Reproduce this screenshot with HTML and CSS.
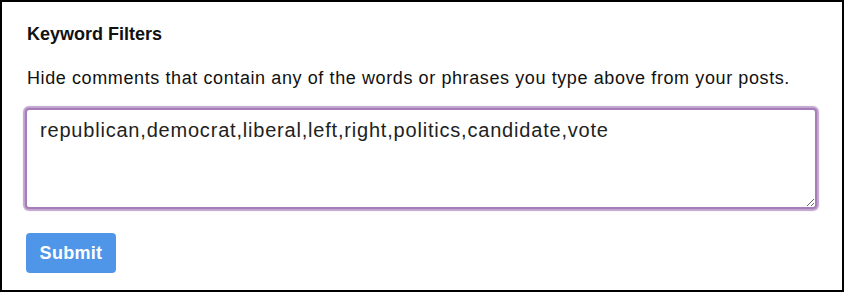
FILE: index.html
```html
<!DOCTYPE html>
<html lang="en">

<head>
  <meta charset="UTF-8">
  <meta name="viewport" content="width=device-width, initial-scale=1.0">
  <title>Keyword Filters</title>
  <link rel="stylesheet" href="styles.css">
</head>

<body>
  <div class="panel">
    <h3 class="tit">Keyword Filters</h3>
    <p class="desc">Hide comments that contain any of the words or phrases you type above from your posts.</p>
    <textarea class="words">republican,democrat,liberal,left,right,politics,candidate,vote</textarea>
    <button class="btn-submit">Submit</button>
  </div>
</body>

</html>
```

FILE: styles.css
```css
body,
div,
h3,
p {
  margin: 0;
  padding: 0;
}

body {
  font-family: "Liberation Sans", Arial, sans-serif;
  color: #111;
  background: #fff;
}

.panel {
  width: 844px;
  height: 292px;
  box-sizing: border-box;
  border: 2px solid #000;
  padding: 21px 24px 0 23px;
}

.tit {
  margin-left: 2px;
  font-size: 18px;
  font-weight: 700;
  line-height: 22px;
}

.desc {
  margin-left: 2px;
  margin-top: 22px;
  font-size: 18px;
  line-height: 22px;
  letter-spacing: 0.6px;
}

.words {
  display: block;
  box-sizing: border-box;
  width: 792px;
  height: 101px;
  margin-top: 19px;
  padding: 8px 13px;
  font-family: "Liberation Sans", Arial, sans-serif;
  font-size: 20px;
  line-height: 24px;
  letter-spacing: 0.8px;
  color: #222;
  border: 2px solid #a77db9;
  border-radius: 4px;
  box-shadow: 0 0 1px 2px rgba(167, 125, 185, 0.7);
  outline: none;
  resize: vertical;
}

.btn-submit {
  display: block;
  margin-top: 24px;
  margin-left: 1px;
  width: 90px;
  height: 40px;
  font-family: "Liberation Sans", Arial, sans-serif;
  font-size: 18px;
  font-weight: 700;
  letter-spacing: 0.3px;
  color: #fff;
  background-color: #5096e8;
  border: none;
  border-radius: 4px;
}
```
